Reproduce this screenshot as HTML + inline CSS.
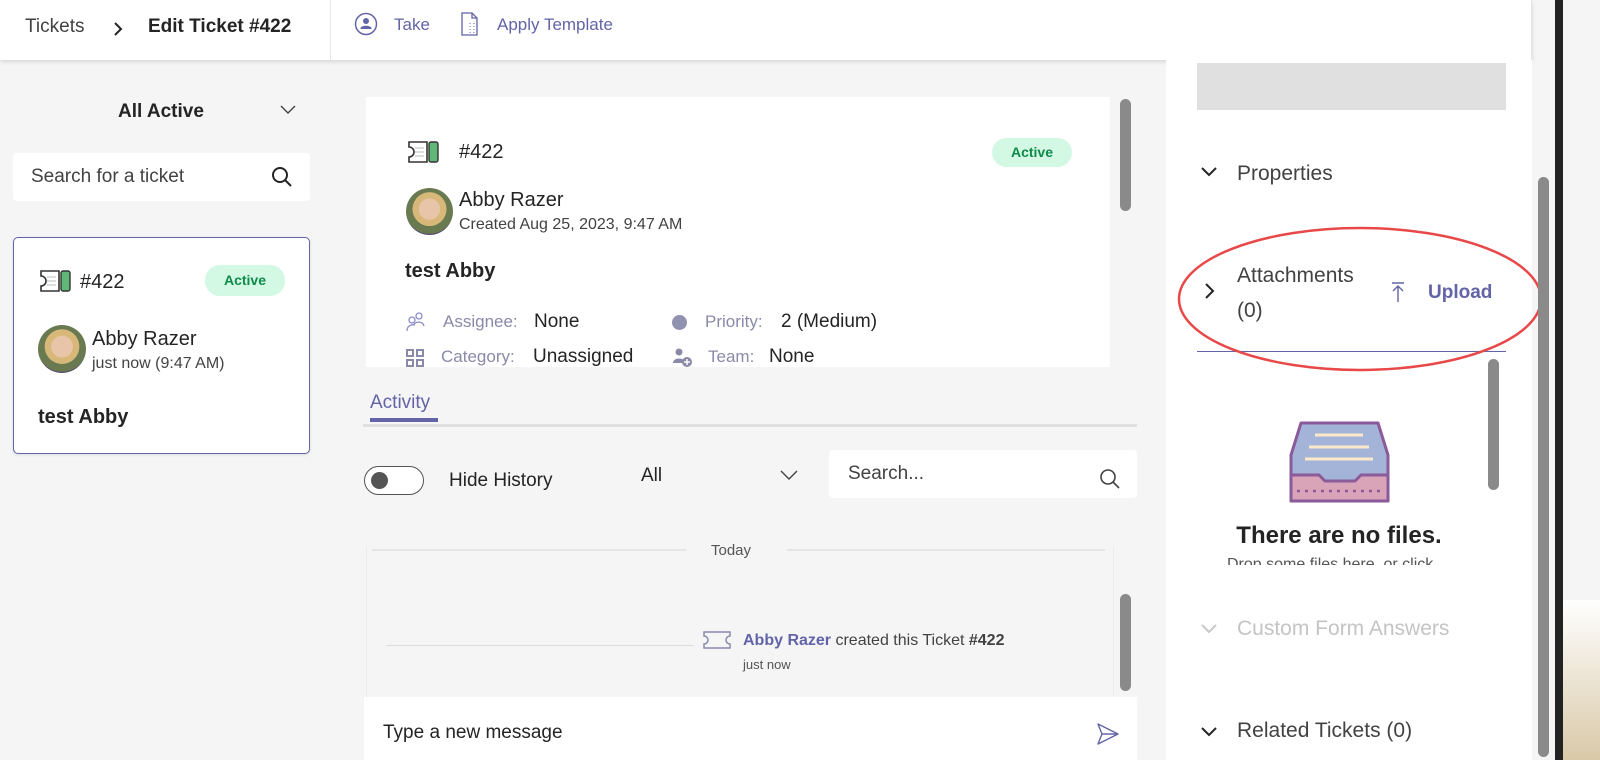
<!DOCTYPE html>
<html><head><meta charset="utf-8"><style>
*{box-sizing:border-box;margin:0;padding:0}
body{width:1600px;height:760px;overflow:hidden;background:#f5f5f5;font-family:"Liberation Sans",sans-serif;color:#242424;position:relative}
.a{position:absolute;white-space:nowrap}
.pill{position:absolute;background:#d3f8e3;color:#0e8a4a;font-weight:bold;font-size:14px;border-radius:15px;text-align:center}
.av{position:absolute;border-radius:50%;background:radial-gradient(circle at 50% 45%,#e8c4a8 0 30%,#d8b878 31% 48%,#6a7a50 49% 70%,#5a4a6a 71%)}
.sb{position:absolute;background:#8a8a8a;border-radius:6px}
</style></head><body>
<!-- header -->
<div class="a" style="left:0;top:0;width:1532px;height:60px;background:#fff;box-shadow:0 2px 4px rgba(0,0,0,.12);border-right:1px solid #e6e6e6"></div>
<div class="a" style="left:330px;top:0;width:1px;height:60px;background:#e6e6e6"></div>
<div class="a" style="left:25px;top:16px;font-size:19px;color:#424242">Tickets</div>
<svg class="a" style="left:111px;top:20px" width="14" height="18"><path d="M4 3l6 6-6 6" stroke="#242424" stroke-width="2" fill="none"/></svg>
<div class="a" style="left:148px;top:16px;font-size:19px;font-weight:bold">Edit Ticket #422</div>
<svg class="a" style="left:354px;top:12px" width="24" height="24"><circle cx="12" cy="12" r="10.5" fill="none" stroke="#6264a7" stroke-width="1.5"/><circle cx="12" cy="9" r="3" fill="#6264a7"/><path d="M6.5 16c1-3 10-3 11 0v1h-11z" fill="#6264a7"/></svg>
<div class="a" style="left:394px;top:15px;font-size:17px;color:#6264a7">Take</div>
<svg class="a" style="left:460px;top:11px" width="20" height="26"><path d="M2 2h10l5 5v17H2z" fill="none" stroke="#6264a7" stroke-width="1.3"/><path d="M12 2v5h5" fill="none" stroke="#6264a7" stroke-width="1.3"/><path d="M10 12v10M14 12v10" stroke="#6264a7" stroke-dasharray="1 2"/></svg>
<div class="a" style="left:497px;top:15px;font-size:17px;color:#6264a7">Apply Template</div>
<div class="a" style="left:1555px;top:0;width:8px;height:760px;background:#222"></div>
<div class="a" style="left:1563px;top:600px;width:37px;height:160px;background:linear-gradient(#fff,#d9c9a8)"></div>

<!-- left -->
<div class="a" style="left:118px;top:101px;font-size:19px;font-weight:bold;color:#242424">All Active</div>
<svg class="a" style="left:279px;top:104px" width="18" height="12"><path d="M2 2l7 7 7-7" stroke="#424242" stroke-width="1.4" fill="none"/></svg>
<div class="a" style="left:13px;top:153px;width:297px;height:48px;background:#fff;border-radius:4px"></div>
<div class="a" style="left:31px;top:166px;font-size:19px;color:#424242">Search for a ticket</div>
<svg class="a" style="left:270px;top:165px" width="24" height="24"><circle cx="10" cy="10" r="7" fill="none" stroke="#242424" stroke-width="2"/><path d="M15 15l6 6" stroke="#242424" stroke-width="2"/></svg>
<div class="a" style="left:13px;top:237px;width:297px;height:217px;background:#fff;border:1px solid #6264a7;border-radius:5px;box-shadow:0 1px 3px rgba(0,0,0,.1)"></div>
<svg class="a" style="left:39px;top:269px" width="34" height="24"><path d="M2 2h18v20H2v-5a4 4 0 0 0 0-10z" fill="#fff" stroke="#333" stroke-width="1.6"/><rect x="22" y="2" width="9" height="20" rx="2" fill="#5fb878" stroke="#333" stroke-width="1.4"/><path d="M8 8h9M8 12h9M8 16h9" stroke="#bbb"/></svg>
<div class="a" style="left:80px;top:271px;font-size:20px">#422</div>
<div class="pill" style="left:205px;top:265px;width:80px;height:31px;line-height:31px">Active</div>
<div class="av" style="left:38px;top:325px;width:48px;height:48px"></div>
<div class="a" style="left:92px;top:328px;font-size:20px">Abby Razer</div>
<div class="a" style="left:92px;top:355px;font-size:16px;color:#424242">just now (9:47 AM)</div>
<div class="a" style="left:38px;top:406px;font-size:20px;font-weight:bold">test Abby</div>

<!-- middle card -->
<div class="a" style="left:366px;top:97px;width:744px;height:270px;background:#fff;overflow:hidden">
 <svg class="a" style="left:41px;top:43px" width="34" height="24"><path d="M2 2h18v20H2v-5a4 4 0 0 0 0-10z" fill="#fff" stroke="#333" stroke-width="1.6"/><rect x="22" y="2" width="9" height="20" rx="2" fill="#5fb878" stroke="#333" stroke-width="1.4"/><path d="M8 8h9M8 12h9M8 16h9" stroke="#bbb"/></svg>
 <div class="a" style="left:93px;top:44px;font-size:20px">#422</div>
 <div class="pill" style="left:626px;top:41px;width:80px;height:29px;line-height:29px">Active</div>
 <div class="av" style="left:40px;top:91px;width:47px;height:47px"></div>
 <div class="a" style="left:93px;top:92px;font-size:20px">Abby Razer</div>
 <div class="a" style="left:93px;top:119px;font-size:16px;color:#424242">Created Aug 25, 2023, 9:47 AM</div>
 <div class="a" style="left:39px;top:163px;font-size:20px;font-weight:bold">test Abby</div>
 <svg class="a" style="left:39px;top:214px" width="22" height="22"><circle cx="7" cy="9" r="3" fill="none" stroke="#8b8cc7" stroke-width="1.3"/><circle cx="14" cy="5" r="3" fill="none" stroke="#8b8cc7" stroke-width="1.3"/><path d="M2 20c0-5 4-7 8-6M9 14c1-4 9-4 10 1" fill="none" stroke="#8b8cc7" stroke-width="1.3"/></svg>
 <div class="a" style="left:77px;top:215px;font-size:17px;color:#8a8aa8">Assignee:</div>
 <div class="a" style="left:168px;top:214px;font-size:19px">None</div>
 <div class="a" style="left:306px;top:218px;width:15px;height:15px;border-radius:50%;background:#9191b0"></div>
 <div class="a" style="left:339px;top:215px;font-size:17px;color:#8a8aa8">Priority:</div>
 <div class="a" style="left:415px;top:214px;font-size:19px">2 (Medium)</div>
 <svg class="a" style="left:39px;top:251px" width="20" height="20"><g fill="none" stroke="#8a8aa8" stroke-width="2"><rect x="2" y="2" width="6" height="6"/><rect x="12" y="2" width="6" height="6"/><rect x="2" y="12" width="6" height="6"/><rect x="12" y="12" width="6" height="6"/></g></svg>
 <div class="a" style="left:75px;top:250px;font-size:17px;color:#8a8aa8">Category:</div>
 <div class="a" style="left:167px;top:249px;font-size:19px">Unassigned</div>
 <svg class="a" style="left:306px;top:250px" width="22" height="22"><circle cx="7" cy="5" r="3.5" fill="#8a8aa8"/><path d="M1 16c0-6 12-6 12 0z" fill="#8a8aa8"/><circle cx="15" cy="15" r="5" fill="#8a8aa8"/><path d="M15 12v6M12 15h6" stroke="#fff" stroke-width="1.4"/></svg>
 <div class="a" style="left:342px;top:250px;font-size:17px;color:#8a8aa8">Team:</div>
 <div class="a" style="left:403px;top:249px;font-size:19px">None</div>
</div>
<div class="sb" style="left:1120px;top:99px;width:11px;height:112px"></div>

<!-- activity -->
<div class="a" style="left:370px;top:392px;font-size:19px;color:#6264a7">Activity</div>
<div class="a" style="left:363px;top:424px;width:774px;height:3px;background:#e0e0e0"></div>
<div class="a" style="left:370px;top:418px;width:68px;height:4px;background:#6264a7"></div>
<div class="a" style="left:364px;top:466px;width:60px;height:29px;border:1.5px solid #555;border-radius:15px;background:#fff"></div>
<div class="a" style="left:371px;top:472px;width:17px;height:17px;border-radius:50%;background:#555"></div>
<div class="a" style="left:449px;top:470px;font-size:19px">Hide History</div>
<div class="a" style="left:641px;top:465px;font-size:19px">All</div>
<svg class="a" style="left:779px;top:468px" width="20" height="14"><path d="M2 3l8 8 8-8" stroke="#424242" stroke-width="1.4" fill="none"/></svg>
<div class="a" style="left:829px;top:450px;width:308px;height:48px;background:#fff;border-radius:4px"></div>
<div class="a" style="left:848px;top:463px;font-size:19px;color:#424242">Search...</div>
<svg class="a" style="left:1098px;top:467px" width="24" height="24"><circle cx="10" cy="10" r="7" fill="none" stroke="#424242" stroke-width="1.6"/><path d="M15 15l6 6" stroke="#424242" stroke-width="1.6"/></svg>
<div class="a" style="left:366px;top:546px;width:748px;height:160px;border-left:1px solid #ebebeb;border-right:1px solid #ebebeb"></div>
<div class="a" style="left:372px;top:549px;width:314px;height:2px;background:#e5e5e5"></div>
<div class="a" style="left:787px;top:549px;width:318px;height:2px;background:#e5e5e5"></div>
<div class="a" style="left:711px;top:542px;font-size:15px;color:#555">Today</div>
<div class="a" style="left:386px;top:645px;width:308px;height:1px;background:#ddd"></div>
<svg class="a" style="left:702px;top:630px" width="30" height="20"><path d="M2 2h26v4a4 4 0 0 0 0 8v4H2v-4a4 4 0 0 0 0-8z" fill="none" stroke="#8a8ab0" stroke-width="1.5"/></svg>
<div class="a" style="left:743px;top:632px;font-size:16px;color:#424242"><b style="color:#6264a7">Abby Razer</b> created this Ticket <b>#422</b></div>
<div class="a" style="left:743px;top:657px;font-size:13px;color:#555">just now</div>
<div class="sb" style="left:1120px;top:594px;width:11px;height:97px"></div>
<div class="a" style="left:364px;top:697px;width:773px;height:63px;background:#fff"></div>
<div class="a" style="left:383px;top:722px;font-size:19px">Type a new message</div>
<svg class="a" style="left:1095px;top:721px" width="26" height="26"><path d="M3 3l20 10L3 23l4-10z M7 13h16" fill="none" stroke="#6264a7" stroke-width="1.4" stroke-linejoin="round"/></svg>

<!-- right panel -->
<div class="a" style="left:1166px;top:60px;width:366px;height:700px;background:#fff"></div>
<div class="a" style="left:1197px;top:63px;width:309px;height:47px;background:#e0e0e0"></div>
<svg class="a" style="left:1200px;top:165px" width="18" height="14"><path d="M2 3l7 7 7-7" stroke="#242424" stroke-width="2" fill="none"/></svg>
<div class="a" style="left:1237px;top:162px;font-size:21px;color:#424242">Properties</div>
<svg class="a" style="left:1203px;top:282px" width="14" height="18"><path d="M3 2l7 7-7 7" stroke="#242424" stroke-width="2" fill="none"/></svg>
<div class="a" style="left:1237px;top:264px;font-size:21px;color:#424242">Attachments</div>
<div class="a" style="left:1237px;top:299px;font-size:21px;color:#424242">(0)</div>
<svg class="a" style="left:1390px;top:281px" width="16" height="22"><path d="M2 2h12M8 5v16M3 10l5-5 5 5" stroke="#6264a7" stroke-width="1.4" fill="none"/></svg>
<div class="a" style="left:1428px;top:282px;font-size:19px;font-weight:bold;color:#6264a7">Upload</div>
<div class="a" style="left:1197px;top:351px;width:309px;height:1px;background:#6264a7"></div>
<svg class="a" style="left:1170px;top:220px" width="380" height="160"><ellipse cx="190" cy="79" rx="181" ry="71" fill="none" stroke="#e84848" stroke-width="2.5"/></svg>
<div class="sb" style="left:1488px;top:359px;width:11px;height:131px"></div>
<svg class="a" style="left:1289px;top:421px" width="101" height="84"><path d="M12 2h77l10 32v46H2V34z" fill="#a3b4d8" stroke="#8a5a9a" stroke-width="3" stroke-linejoin="round"/><path d="M2 54h28l6 6h30l6-6h27v26H2z" fill="#d9a4b8" stroke="#8a5a9a" stroke-width="3" stroke-linejoin="round"/><path d="M26 14h48M20 26h60M16 38h68" stroke="#fbe8c8" stroke-width="3"/><path d="M8 70h86" stroke="#8a5a9a" stroke-width="2.5" stroke-dasharray="3 5"/></svg>
<div class="a" style="left:1339px;top:522px;transform:translateX(-50%);font-size:24px;font-weight:bold">There are no files.</div>
<div class="a" style="left:1227px;top:556px;width:220px;height:9px;overflow:hidden"><div style="font-size:16px;color:#555;margin-top:0">Drop some files here, or click</div></div>
<svg class="a" style="left:1200px;top:622px" width="18" height="14"><path d="M2 3l7 7 7-7" stroke="#c8c8c8" stroke-width="2" fill="none"/></svg>
<div class="a" style="left:1237px;top:617px;font-size:21px;color:#c4c4c4">Custom Form Answers</div>
<svg class="a" style="left:1200px;top:725px" width="18" height="14"><path d="M2 3l7 7 7-7" stroke="#242424" stroke-width="2" fill="none"/></svg>
<div class="a" style="left:1237px;top:719px;font-size:21px;color:#424242">Related Tickets (0)</div>
<div class="sb" style="left:1538px;top:177px;width:11px;height:580px"></div>
</body></html>
